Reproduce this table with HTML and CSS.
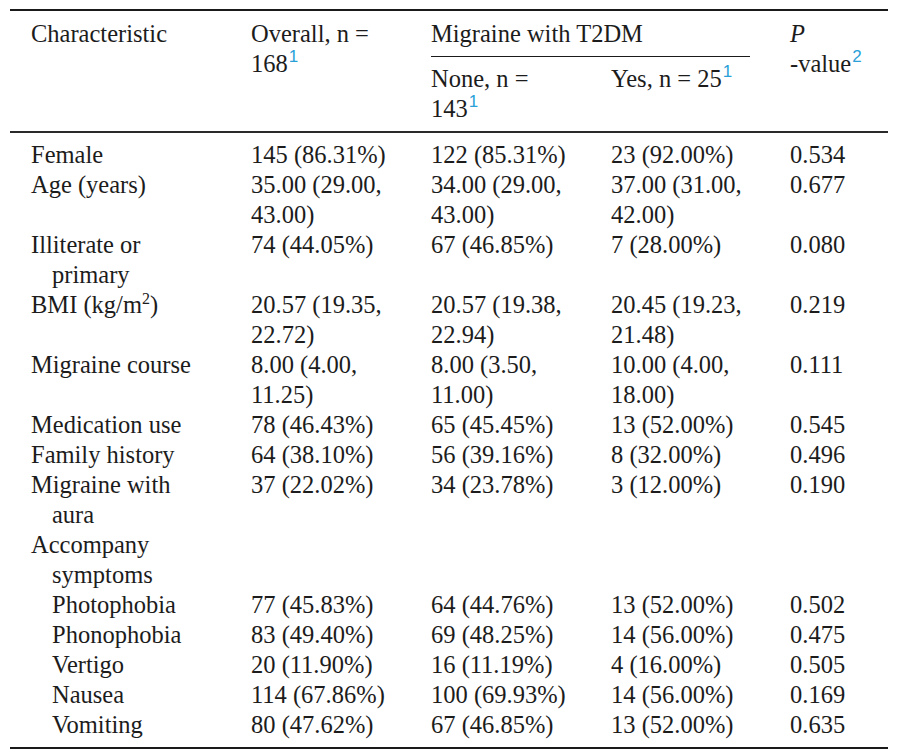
FILE: index.html
```html
<!DOCTYPE html>
<html lang="en">
<head>
<meta charset="utf-8">
<title>Characteristics table</title>
<link rel="stylesheet" href="styles.css">
</head>
<body>
<div class="wrap">
<table class="tbl">
  <colgroup>
    <col class="w1"><col class="w2"><col class="w2"><col class="w4"><col class="w5">
  </colgroup>
  <thead>
    <tr class="h1">
      <th rowspan="2" class="c1 hb">Characteristic</th>
      <th rowspan="2" class="hb">Overall, n =<br>168<sup class="fn">1</sup></th>
      <th colspan="2" class="span"><div class="spanline">Migraine with T2DM</div></th>
      <th rowspan="2" class="c5 hb"><i>P</i><br>-value<sup class="fn">2</sup></th>
    </tr>
    <tr class="h2">
      <th class="hb">None, n =<br>143<sup class="fn">1</sup></th>
      <th class="hb">Yes, n = 25<sup class="fn">1</sup></th>
    </tr>
  </thead>
  <tbody>
    <tr class="first"><td class="c1">Female</td><td>145 (86.31%)</td><td>122 (85.31%)</td><td>23 (92.00%)</td><td class="c5">0.534</td></tr>
    <tr><td class="c1">Age (years)</td><td>35.00 (29.00, 43.00)</td><td>34.00 (29.00, 43.00)</td><td>37.00 (31.00, 42.00)</td><td class="c5">0.677</td></tr>
    <tr><td class="c1">Illiterate or primary</td><td>74 (44.05%)</td><td>67 (46.85%)</td><td>7 (28.00%)</td><td class="c5">0.080</td></tr>
    <tr><td class="c1">BMI (kg/m<sup class="ex">2</sup>)</td><td>20.57 (19.35, 22.72)</td><td>20.57 (19.38, 22.94)</td><td>20.45 (19.23, 21.48)</td><td class="c5">0.219</td></tr>
    <tr><td class="c1">Migraine course</td><td>8.00 (4.00, 11.25)</td><td>8.00 (3.50, 11.00)</td><td>10.00 (4.00, 18.00)</td><td class="c5">0.111</td></tr>
    <tr><td class="c1">Medication use</td><td>78 (46.43%)</td><td>65 (45.45%)</td><td>13 (52.00%)</td><td class="c5">0.545</td></tr>
    <tr><td class="c1">Family history</td><td>64 (38.10%)</td><td>56 (39.16%)</td><td>8 (32.00%)</td><td class="c5">0.496</td></tr>
    <tr><td class="c1">Migraine with<br>aura</td><td>37 (22.02%)</td><td>34 (23.78%)</td><td>3 (12.00%)</td><td class="c5">0.190</td></tr>
    <tr><td class="c1">Accompany<br>symptoms</td><td></td><td></td><td></td><td class="c5"></td></tr>
    <tr><td class="c1 sub">Photophobia</td><td>77 (45.83%)</td><td>64 (44.76%)</td><td>13 (52.00%)</td><td class="c5">0.502</td></tr>
    <tr><td class="c1 sub">Phonophobia</td><td>83 (49.40%)</td><td>69 (48.25%)</td><td>14 (56.00%)</td><td class="c5">0.475</td></tr>
    <tr><td class="c1 sub">Vertigo</td><td>20 (11.90%)</td><td>16 (11.19%)</td><td>4 (16.00%)</td><td class="c5">0.505</td></tr>
    <tr><td class="c1 sub">Nausea</td><td>114 (67.86%)</td><td>100 (69.93%)</td><td>14 (56.00%)</td><td class="c5">0.169</td></tr>
    <tr class="last"><td class="c1 sub">Vomiting</td><td>80 (47.62%)</td><td>67 (46.85%)</td><td>13 (52.00%)</td><td class="c5">0.635</td></tr>
  </tbody>
</table>
</div>
</body>
</html>
```

FILE: styles.css
```css
html, body {
  margin: 0;
  padding: 0;
  background: #ffffff;
}

.wrap {
  padding: 9px 0 0 10px;
}

.tbl {
  width: 878px;
  table-layout: fixed;
  border-collapse: separate;
  border-spacing: 0;
  border-top: 2px solid #1a1a1a;
  border-bottom: 2px solid #1a1a1a;
  font-family: "Liberation Serif", "Times New Roman", serif;
  font-size: 24.5px;
  line-height: 30px;
  color: #1c1c1c;
}

.w1 { width: 221px; }
.w2 { width: 180px; }
.w4 { width: 179px; }
.w5 { width: 118px; }

.tbl th,
.tbl td {
  text-align: left;
  vertical-align: top;
  font-weight: normal;
  padding: 0 20px;
}

.tbl th.c1,
.tbl td.c1 {
  padding-left: 42px;
  text-indent: -21px;
}

.tbl td.c1.sub {
  padding-left: 42px;
  text-indent: 0;
}

.tbl th.c5,
.tbl td.c5 {
  padding-right: 0;
}

.h1 th {
  padding-top: 8px;
}

.h1 th.hb {
  padding-bottom: 7px;
}

.h2 th {
  padding-top: 7px;
  padding-bottom: 7px;
}

.tbl th.hb {
  border-bottom: 2px solid #2a2a2a;
}

.tbl th.span {
  padding-bottom: 0;
}

.spanline {
  padding-bottom: 7px;
  border-bottom: 1px solid #1a1a1a;
}

.first td {
  padding-top: 7px;
}

.last td {
  padding-bottom: 7px;
}

sup {
  line-height: 0;
}

.fn {
  font-family: "Liberation Sans", Arial, sans-serif;
  font-size: 17px;
  vertical-align: 10px;
  color: #2a9fd8;
  margin-left: 1px;
}

.ex {
  font-size: 16px;
  vertical-align: 9px;
}
```
